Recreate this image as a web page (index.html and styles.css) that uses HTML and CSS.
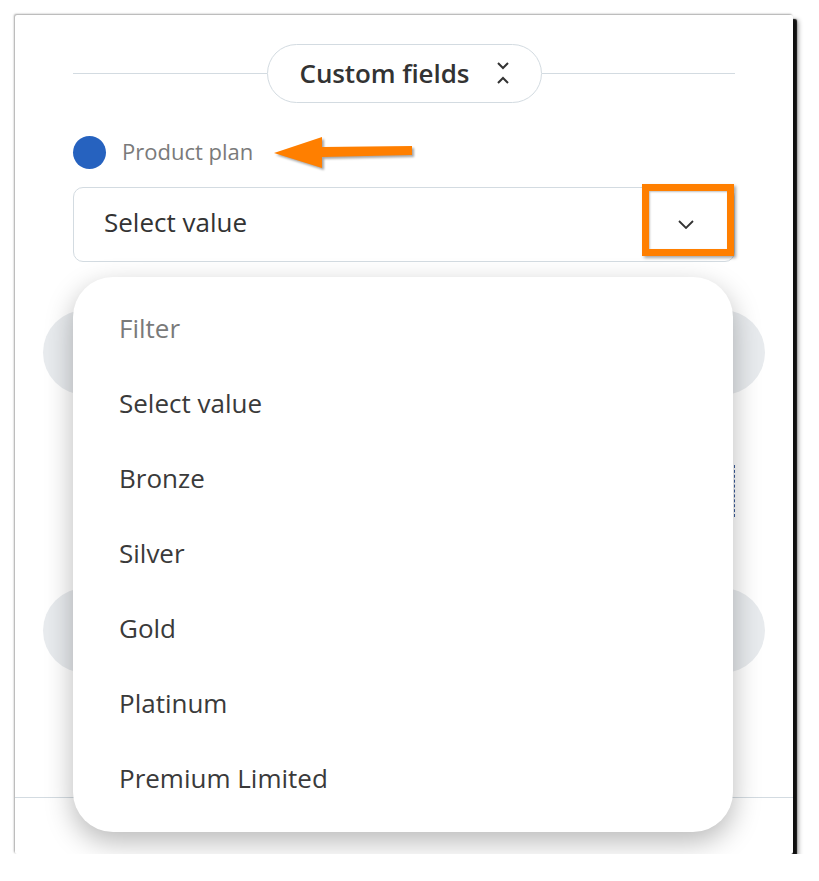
FILE: index.html
```html
<!DOCTYPE html>
<html lang="en">
<head>
<meta charset="utf-8">
<title>Custom fields</title>
<link rel="stylesheet" href="styles.css">
</head>
<body>
<div class="frame">
  <div class="content">
    <div class="section-header">
      <span class="rule"></span>
      <button class="pill">
        <span class="pill-text">Custom fields</span>
        <svg class="pill-icon" width="12" height="22" viewBox="0 0 12 22"><polyline points="1,1 6,6 11,1" fill="none" stroke="#333" stroke-width="2"/><polyline points="1,21 6,16 11,21" fill="none" stroke="#333" stroke-width="2"/></svg>
      </button>
      <span class="rule"></span>
    </div>

    <div class="label-row">
      <span class="dot"></span>
      <span class="label">Product plan</span>
    </div>

    <div class="select">
      <span class="select-text">Select value</span>
      <svg class="select-chevron" width="16" height="9" viewBox="0 0 16 9"><polyline points="1,1 8,8 15,1" fill="none" stroke="#333" stroke-width="1.8"/></svg>
    </div>

    <div class="bg-row first">
      <span class="bg-circle"></span>
      <span class="bg-circle"></span>
    </div>
    <div class="bg-dashed"></div>
    <div class="bg-row">
      <span class="bg-circle"></span>
      <span class="bg-circle"></span>
    </div>
    <div class="footer-rule"></div>
  </div>

  <svg class="arrow" width="150" height="45" viewBox="0 0 150 45"><polygon points="4,21 52,5 52,15 142,14 142,23 52,25 52,36" fill="#ff7f00"/></svg>
  <div class="highlight"></div>

  <ul class="menu">
    <li class="menu-item filter">Filter</li>
    <li class="menu-item">Select value</li>
    <li class="menu-item">Bronze</li>
    <li class="menu-item">Silver</li>
    <li class="menu-item">Gold</li>
    <li class="menu-item">Platinum</li>
    <li class="menu-item">Premium Limited</li>
  </ul>
</div>
</body>
</html>
```
FILE: styles.css
```css
* { box-sizing: border-box; }
html, body { margin: 0; padding: 0; background: #fff; }
body { font-family: "Open Sans", "Noto Sans", "Liberation Sans", sans-serif; color: #333; }

.frame {
  position: relative;
  margin: 15px 0 0 15px;
  width: 778px;
  height: 839px;
  background: #fff;
  border-radius: 2px;
  box-shadow: 4px 4px 1px rgba(0,0,0,0.9), 5px 5px 5px rgba(0,0,0,0.45), -1px -1px 2px rgba(0,0,0,0.35);
}

.content { padding: 29px 58px 0; }

.section-header { display: flex; align-items: center; height: 59px; }
.rule { flex: 1; height: 1px; background: #d3dbe1; }
.pill {
  display: flex; align-items: center;
  height: 59px; width: 275px;
  padding: 0 32px 2px;
  border: 1px solid #d3dbe1; border-radius: 30px;
  background: #fff;
  font-family: inherit;
  cursor: pointer;
}
.pill-text { font-size: 26px; font-weight: 600; color: #333; white-space: nowrap; letter-spacing: -0.1px; }
.pill-icon { margin-left: auto; }

.label-row { display: flex; align-items: center; margin-top: 33px; height: 33px; }
.dot { width: 33px; height: 33px; border-radius: 50%; background: #2662bf; flex: none; }
.label { margin-left: 16px; margin-bottom: 3px; font-size: 22px; color: #7a7a7a; }

.select {
  display: flex; align-items: center;
  margin-top: 18px; height: 75px;
  padding-left: 30px;
  border: 1px solid #d3dbe1; border-radius: 10px;
}
.select-text { font-size: 26px; color: #333; margin-bottom: 6px; }
.select-chevron { margin-left: auto; margin-right: 40px; }

.bg-row { display: flex; justify-content: space-between; margin: 0 -30px; height: 85px; }
.bg-row.first { margin-top: 48px; }
.bg-circle { width: 85px; height: 85px; border-radius: 50%; background: #e8ebee; }
.bg-dashed { margin: 70px 0 71px; height: 52px; border-right: 1px dashed #3a5b99; }
.footer-rule { margin: 124px -58px 0; height: 1px; background: #d3dbe1; }

.arrow {
  position: absolute; left: 255px; top: 117px;
  filter: drop-shadow(2px 2px 1px rgba(0,0,0,0.35));
}
.highlight {
  position: absolute; left: 627px; top: 169px;
  width: 92px; height: 72px;
  border: 7px solid #ff7f00;
  box-shadow: 2px 2px 3px rgba(0,0,0,0.35), inset 1px 1px 2px rgba(0,0,0,0.25);
}

.menu {
  position: absolute; left: 58px; top: 262px;
  width: 660px; height: 555px;
  margin: 0; padding: 15px 0;
  list-style: none;
  background: #fff;
  border-radius: 40px;
  box-shadow: 0 10px 28px rgba(0,0,0,0.28);
}
.menu-item {
  height: 75px; display: flex; align-items: center;
  padding-left: 46px; padding-bottom: 4px;
  font-size: 26px; color: #3a3a3a;
}
.menu-item.filter { color: #7a7a7a; }
```
